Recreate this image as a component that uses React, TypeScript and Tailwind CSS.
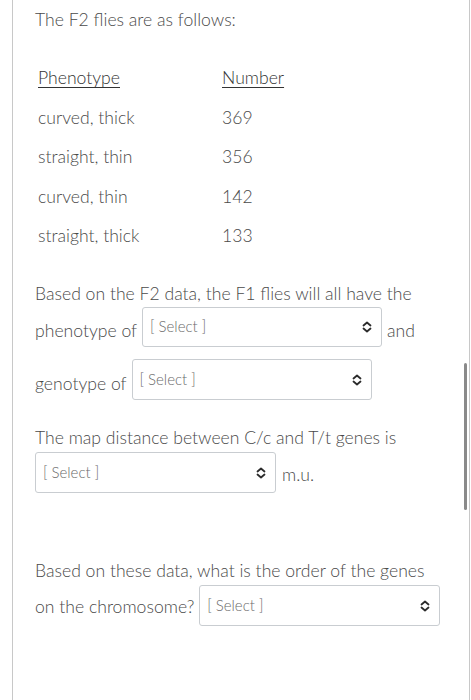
import React from "react";

const Chevron = () => (
  <svg width="10" height="12" viewBox="0 0 10 12" fill="none" className="shrink-0">
    <path d="M1.5 4.5 L5 1.5 L8.5 4.5" stroke="#2b2b2b" strokeWidth="1.8" strokeLinecap="round" strokeLinejoin="round" />
    <path d="M1.5 7.5 L5 10.5 L8.5 7.5" stroke="#2b2b2b" strokeWidth="1.8" strokeLinecap="round" strokeLinejoin="round" />
  </svg>
);

const Select = ({ className = "" }: { className?: string }) => (
  <div
    className={`flex h-[40px] w-[240px] shrink-0 items-center justify-between rounded-[3px] border border-[#c9cdd1] bg-white pl-[7px] pr-[9px] ${className}`}
  >
    <span className="-mt-[1px] text-[15px] text-[#6a6a6a]">[ Select ]</span>
    <Chevron />
  </div>
);

const rows = [
  ["curved, thick", "369"],
  ["straight, thin", "356"],
  ["curved, thin", "142"],
  ["straight, thick", "133"],
];

export default function App() {
  return (
    <div
      className="relative min-h-[700px] bg-white font-light"
      style={{ fontFamily: "Lato, 'Open Sans', sans-serif" }}
    >
      <div className="ml-[12px] mr-[1px] min-h-[700px] border-x border-[#c8c8c8] pl-[22px] text-[17.6px] text-[#4a4a4a]">
        <div className="flex h-[40px] items-center">The F2 flies are as follows:</div>

        <div className="mt-[18px] pl-[3px]">
          <div className="flex h-[40px] items-center text-[#333333]">
            <span className="w-[184px] underline underline-offset-[3px]">Phenotype</span>
            <span className="underline underline-offset-[3px]">Number</span>
          </div>
          {rows.map(([p, n]) => (
            <div key={p} className="flex h-[39.5px] items-center">
              <span className="w-[184px]">{p}</span>
              <span>{n}</span>
            </div>
          ))}
        </div>

        <div className="mt-[26px] flex h-[24px] items-center">
          Based on the F2 data, the F1 flies will all have the
        </div>
        <div className="mt-[1px] flex items-center gap-[5px]">
          <span className="mt-[8px]">phenotype of</span>
          <Select />
          <span className="mt-[8px]">and</span>
        </div>
        <div className="mt-[12px] flex items-center gap-[5px]">
          <span className="mt-[9px]">genotype of</span>
          <Select className="h-[41px]" />
        </div>

        <div className="mt-[26px] flex h-[24px] items-center">
          The map distance between C/c and T/t genes is
        </div>
        <div className="mt-[2px] flex items-center gap-[6px]">
          <Select className="h-[41px] w-[241px]" />
          <span className="mt-[5px]">m.u.</span>
        </div>

        <div className="mt-[66px] flex h-[24px] items-center">
          Based on these data, what is the order of the genes
        </div>
        <div className="mt-[2px] flex items-center gap-[5px]">
          <span className="mt-[4px]">on the chromosome?</span>
          <Select className="h-[41px] w-[241px]" />
        </div>
      </div>

      <div className="absolute left-[464px] top-[363px] h-[147px] w-[3px] rounded-full bg-[#8a8a8a]" />
    </div>
  );
}
